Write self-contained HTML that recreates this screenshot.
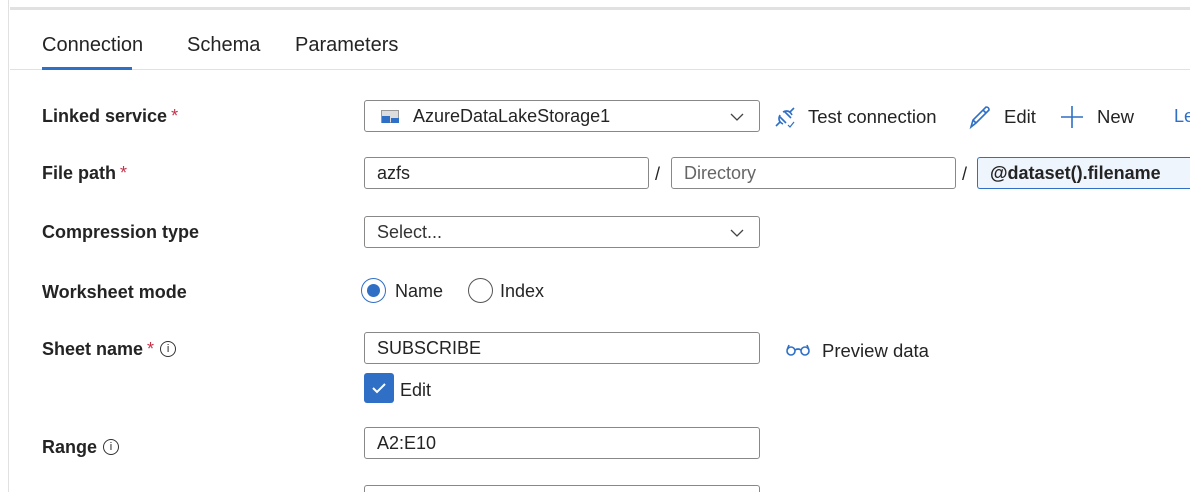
<!DOCTYPE html>
<html><head><style>
html,body{margin:0;width:1190px;height:492px;overflow:hidden}
body{background:#fff;font-family:"Liberation Sans",sans-serif;color:#242424;position:relative}
.a{position:absolute}
.lbl{position:absolute;left:42px;font-size:18px;font-weight:bold;color:#242424}
.req{color:#c4314b;font-weight:normal;margin-left:4px}
.inp{position:absolute;height:32px;border:1px solid #8a8886;border-radius:3px;box-sizing:border-box;font-size:18px;line-height:30px;padding-left:12px;background:#fff}
.t{position:absolute;font-size:18px}
.info{display:inline-block;width:14px;height:14px;border:1.3px solid #333;border-radius:50%;font-size:11px;line-height:14px;text-align:center;font-weight:normal;vertical-align:top;margin-left:6px;margin-top:2px}
</style></head><body>
<div class="a" style="left:8px;top:0;width:1px;height:492px;background:#e1e1e1"></div>
<div class="a" style="left:10px;top:7px;width:1180px;height:3px;background:#e1e1e1"></div>
<div class="t" style="left:42px;top:34px;font-size:20px">Connection</div>
<div class="t" style="left:187px;top:34px;font-size:20px">Schema</div>
<div class="t" style="left:295px;top:34px;font-size:20px">Parameters</div>
<div class="a" style="left:10px;top:69px;width:1180px;height:1px;background:#e1e1e1"></div>
<div class="a" style="left:42px;top:67px;width:90px;height:3px;background:#2f6fc6"></div>

<div class="lbl" style="top:106px">Linked service<span class="req">*</span></div>
<div class="inp" style="left:364px;top:100px;width:396px;padding-left:48px">AzureDataLakeStorage1</div>
<div class="a" style="left:381px;top:110px;width:18px;height:13px;background:#ddd;border:1px solid #999;box-sizing:border-box"><div class="a" style="left:0;top:5px;width:8px;height:7px;background:#2f6fc6"></div><div class="a" style="left:9px;top:7px;width:8px;height:5px;background:#2f6fc6"></div></div>
<svg class="a" style="left:729px;top:112px" width="16" height="10"><path d="M2 2l6 6 6-6" fill="none" stroke="#444" stroke-width="1.3"/></svg>
<svg class="a" style="left:772px;top:104px" width="26" height="26"><g fill="none" stroke="#2f6fc6" stroke-width="1.6"><path d="M4 22l4-4M22 4l-4 4M7 12l7 7M12 7l7 7M8 11q-3 6 3 9M11 8q6-3 9 3"/><path d="M16 21l2 2 4-5" stroke-width="1.2"/></g></svg>
<div class="t" style="left:808px;top:106px;font-size:18.5px">Test connection</div>
<svg class="a" style="left:968px;top:104px" width="24" height="26"><path d="M3 23l2-7 13-13q3 0 3 3L8 19z M5 16l3 3 M15 6l3 3" fill="none" stroke="#2f6fc6" stroke-width="1.6"/></svg>
<div class="t" style="left:1004px;top:106px;font-size:18.5px">Edit</div>
<svg class="a" style="left:1060px;top:105px" width="24" height="24"><path d="M12 1v22M1 12h22" stroke="#2f6fc6" stroke-width="1.6"/></svg>
<div class="t" style="left:1097px;top:106px;font-size:18.5px">New</div>
<div class="t" style="left:1174px;top:106px;color:#2f6fc6">Le</div>

<div class="lbl" style="top:163px">File path<span class="req">*</span></div>
<div class="inp" style="left:364px;top:157px;width:285px">azfs</div>
<div class="t" style="left:655px;top:164px">/</div>
<div class="inp" style="left:671px;top:157px;width:285px;color:#666">Directory</div>
<div class="t" style="left:962px;top:164px">/</div>
<div class="inp" style="left:977px;top:157px;width:213px;background:#eff5fc;border-color:#2f6fc6;border-right:none;border-radius:3px 0 0 3px;font-weight:bold">@dataset().filename</div>

<div class="lbl" style="top:222px">Compression type</div>
<div class="inp" style="left:364px;top:216px;width:396px;color:#333">Select...</div>
<svg class="a" style="left:729px;top:228px" width="16" height="10"><path d="M2 2l6 6 6-6" fill="none" stroke="#444" stroke-width="1.3"/></svg>

<div class="lbl" style="top:282px">Worksheet mode</div>
<div class="a" style="left:361px;top:278px;width:25px;height:25px;border:1px solid #2f6fc6;border-radius:50%;box-sizing:border-box"><div class="a" style="left:5px;top:5px;width:13px;height:13px;border-radius:50%;background:#2f6fc6"></div></div>
<div class="t" style="left:395px;top:281px">Name</div>
<div class="a" style="left:468px;top:278px;width:25px;height:25px;border:1px solid #555;border-radius:50%;box-sizing:border-box"></div>
<div class="t" style="left:500px;top:281px">Index</div>

<div class="lbl" style="top:339px">Sheet name<span class="req">*</span><span class="info">i</span></div>
<div class="inp" style="left:364px;top:332px;width:396px">SUBSCRIBE</div>
<svg class="a" style="left:785px;top:343px" width="26" height="14"><g fill="none" stroke="#2f6fc6" stroke-width="1.6"><circle cx="6" cy="8" r="4"/><circle cx="20" cy="8" r="4"/><path d="M10 7q3-2 6 0M2 7l2-5M24 7l-2-5"/></g></svg>
<div class="t" style="left:822px;top:340px;font-size:18.5px">Preview data</div>
<div class="a" style="left:364px;top:373px;width:30px;height:30px;background:#2f6fc6;border-radius:3px"><svg width="30" height="30"><path d="M9 15l4 4 8-8" fill="none" stroke="#fff" stroke-width="2"/></svg></div>
<div class="t" style="left:400px;top:380px">Edit</div>

<div class="lbl" style="top:437px">Range<span class="info">i</span></div>
<div class="inp" style="left:364px;top:427px;width:396px">A2:E10</div>
<div class="inp" style="left:364px;top:485px;width:396px;height:7px;border-bottom:none;border-radius:3px 3px 0 0"></div>
</body></html>
